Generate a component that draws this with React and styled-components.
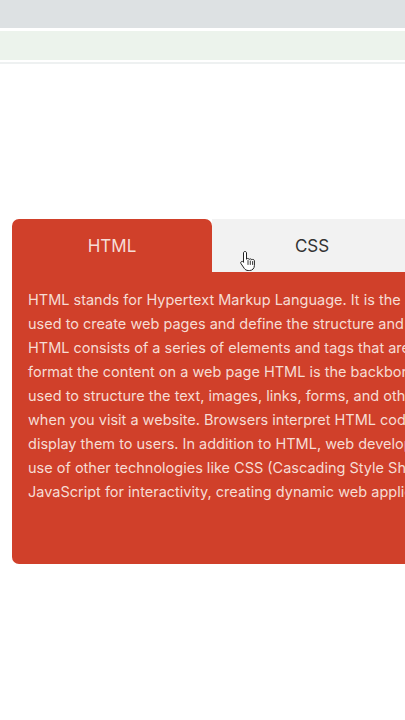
import React from "react";
import styled, { createGlobalStyle } from "styled-components";

const Global = createGlobalStyle`
  html, body { margin: 0; padding: 0; background: #ffffff; overflow: hidden; }
  body { font-family: Inter, "Noto Sans", sans-serif; width: 405px; height: 720px; }
`;

const Page = styled.div`
  width: 405px;
  height: 720px;
  overflow: hidden;
  display: flex;
  flex-direction: column;
  background: #ffffff;
`;

const TopBar = styled.div`
  height: 28px;
  background: #dde1e3;
  flex-shrink: 0;
`;

const GreenBar = styled.div`
  height: 29px;
  margin-top: 3px;
  background: #ecf3ec;
  flex-shrink: 0;
`;

const Rule = styled.div`
  height: 2px;
  margin-top: 2px;
  background: #eef1f1;
  flex-shrink: 0;
`;

const Content = styled.div`
  padding: 155px 0 0 12px;
`;

const Card = styled.div`
  width: 600px;
  display: flex;
  flex-direction: column;
`;

const TabBar = styled.div`
  position: relative;
  display: flex;
  height: 53px;
`;

const Tab = styled.div`
  width: 200px;
  display: flex;
  align-items: center;
  justify-content: center;
  font-family: Inter, sans-serif;
  font-size: 17px;
  background: ${(p) => (p.$active ? "#d0402a" : "#f2f2f2")};
  color: ${(p) => (p.$active ? "#f6ddd6" : "#333333")};
  border-radius: ${(p) => (p.$active ? "7px 7px 0 0" : "0")};
`;

const Cursor = styled.svg`
  position: absolute;
  left: 228px;
  top: 31px;
  width: 16px;
  height: 22px;
`;

const Panel = styled.div`
  background: #d0402a;
  height: 292px;
  box-sizing: border-box;
  padding: 16px 16px;
  border-radius: 0 0 7px 7px;
`;

const Text = styled.p`
  margin: 0;
  font-family: Inter, sans-serif;
  font-size: 14.5px;
  line-height: 24px;
  color: #f6dcd4;
  white-space: nowrap;
`;

const lines = [
  "HTML stands for Hypertext Markup Language. It is the standard markup language",
  "used to create web pages and define the structure and content of a document.",
  "HTML consists of a series of elements and tags that are used to structure and",
  "format the content on a web page HTML is the backbone of any website, it is",
  "used to structure the text, images, links, forms, and other content you see",
  "when you visit a website. Browsers interpret HTML code to render pages and",
  "display them to users. In addition to HTML, web developers often make",
  "use of other technologies like CSS (Cascading Style Sheets) for styling and",
  "JavaScript for interactivity, creating dynamic web applications.",
];

export default function App() {
  return (
    <>
      <Global />
      <Page>
        <TopBar />
        <GreenBar />
        <Rule />
        <Content>
          <Card>
            <TabBar>
              <Tab $active>HTML</Tab>
              <Tab>CSS</Tab>
              <Tab>JavaScript</Tab>
              <Cursor viewBox="0 0 16 22">
                <path
                  d="M5 1.5c.9 0 1.5.6 1.5 1.5v6.2c.3-.5.8-.7 1.3-.7.7 0 1.2.4 1.4 1 .3-.4.7-.6 1.2-.6.7 0 1.2.4 1.4 1 .3-.3.7-.5 1.1-.5.9 0 1.5.7 1.5 1.6v4.4c0 3-2 5.1-4.8 5.1H8.2c-1.8 0-3-.8-4-2.2L1 13.6c-.5-.8-.3-1.6.4-2 .6-.4 1.4-.2 1.9.4l.2.3V3c0-.9.6-1.5 1.5-1.5z"
                  fill="#ffffff"
                  stroke="#222222"
                  strokeWidth="1"
                  strokeLinejoin="round"
                />
                <path d="M8 10.5v4M10.3 11v3.5M12.6 11.5v3" stroke="#222222" strokeWidth="0.9" strokeLinecap="round" />
              </Cursor>
            </TabBar>
            <Panel>
              <Text>
                {lines.map((l, i) => (
                  <React.Fragment key={i}>
                    {l}
                    {i < lines.length - 1 && <br />}
                  </React.Fragment>
                ))}
              </Text>
            </Panel>
          </Card>
        </Content>
      </Page>
    </>
  );
}
